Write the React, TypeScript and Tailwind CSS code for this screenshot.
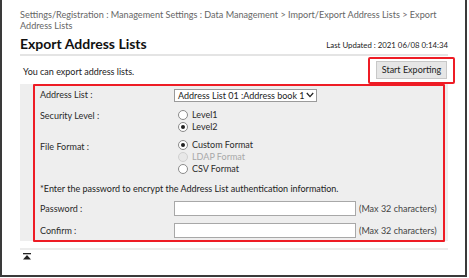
import React from 'react'

function Radio({ checked, disabled, label }: { checked?: boolean; disabled?: boolean; label: string }) {
  return (
    <div className="flex h-[12px] items-center">
      <span
        className={
          'flex h-[10px] w-[10px] items-center justify-center rounded-full border ' +
          (disabled ? 'border-[#d0d0d0] bg-[#e8e8e8]' : 'border-[#8a8a8a] bg-white')
        }
      >
        {checked && <span className="h-[4px] w-[4px] rounded-full bg-[#222]" />}
      </span>
      <span className={'ml-[4px] whitespace-nowrap ' + (disabled ? 'text-[#a8a8a8]' : 'text-[#2a2a2a]')}>{label}</span>
    </div>
  )
}

function TopIcon() {
  return (
    <svg width="8" height="7" viewBox="0 0 8 7">
      <rect x="0" y="0" width="8" height="1.3" fill="#222" />
      <polygon points="4,2 8,6.6 0,6.6" fill="#222" />
    </svg>
  )
}

export default function App() {
  return (
    <div className="h-[278px] w-[469px] bg-white" style={{ fontFamily: 'Lato, "Open Sans", sans-serif' }}>
      <div className="h-[277px] w-[467px] border-x-2 border-b-2 border-[#3a3a3a] pl-[18px] pt-[9px] text-[9px] text-[#2a2a2a]">
        <div className="w-[428px]">
          <div className="whitespace-nowrap text-[9.1px] leading-[11px] text-[#666]">
            Settings/Registration : Management Settings : Data Management &gt; Import/Export Address Lists &gt; Export
            <br />
            Address Lists
          </div>

          <div className="mt-[5px] flex h-[20px] items-end justify-between border-b-2 border-[#e4e4e4] pb-[1px]">
            <h1 className="whitespace-nowrap text-[14px] font-bold leading-[18px] text-[#111]">Export Address Lists</h1>
            <span className="whitespace-nowrap pb-[3px] text-[7.8px] leading-[10px] text-[#222]">Last Updated : 2021 06/08 0:14:34</span>
          </div>

          <div className="flex h-[28px] items-center justify-between">
            <span className="whitespace-nowrap pl-[3px] pt-[3px] text-[#222]">You can export address lists.</span>
            <div className="-mr-[7px] flex h-[27px] w-[87px] items-center justify-center rounded-[2px] border-2 border-[#ee1c25]">
              <button className="h-[18px] w-[71px] whitespace-nowrap border border-[#c8c8c8] bg-[#e6e6e6] text-[9px] leading-[16px] text-[#222]">
                Start Exporting
              </button>
            </div>
          </div>

          <div className="flex h-[157px] bg-[#eeeeee] pl-[13px]">
            <div className="h-[158px] w-[412px] rounded-[1px] border-2 border-[#ee1c25] pl-[5px] pt-[2px]">
              <div className="flex h-[14px] items-center">
                <span className="w-[134px] whitespace-nowrap">Address List :</span>
                <div className="flex h-[13px] w-[143px] items-center justify-between border border-[#9a9a9a] bg-white pl-[3px] pr-[2px] leading-[11px] text-[#222]">
                  <span className="whitespace-nowrap">Address List 01 :Address book 1</span>
                  <svg width="8" height="6" viewBox="0 0 8 6">
                    <polyline points="0.8,1 4,4.6 7.2,1" fill="none" stroke="#222" strokeWidth="1.3" />
                  </svg>
                </div>
              </div>

              <div className="mt-[7px] flex">
                <span className="w-[134px] whitespace-nowrap pt-[1px] leading-[12px]">Security Level :</span>
                <div className="pl-[4px]">
                  <Radio label="Level1" />
                  <Radio label="Level2" checked />
                </div>
              </div>

              <div className="mt-[6px] flex">
                <span className="w-[134px] whitespace-nowrap pt-[2px] leading-[12px]">File Format :</span>
                <div className="pl-[4px]">
                  <Radio label="Custom Format" checked />
                  <Radio label="LDAP Format" disabled />
                  <Radio label="CSV Format" />
                </div>
              </div>

              <div className="mt-[8px] h-[12px] whitespace-nowrap leading-[12px] text-[#222]">
                *Enter the password to encrypt the Address List authentication information.
              </div>

              <div className="mt-[5px] flex h-[17px] items-center">
                <span className="w-[134px] whitespace-nowrap">Password :</span>
                <input type="password" className="h-[15px] w-[182px] border border-[#a8a8a8] bg-white outline-none" />
                <span className="ml-[3px] whitespace-nowrap text-[#444]">(Max 32 characters)</span>
              </div>

              <div className="mt-[5px] flex h-[17px] items-center">
                <span className="w-[134px] whitespace-nowrap">Confirm :</span>
                <input type="password" className="h-[15px] w-[182px] border border-[#a8a8a8] bg-white outline-none" />
                <span className="ml-[3px] whitespace-nowrap text-[#444]">(Max 32 characters)</span>
              </div>
            </div>
          </div>

          <div className="mt-[7px] h-[2px] bg-[#ececec]" />
          <div className="mt-[3px] pl-[3px]">
            <TopIcon />
          </div>
        </div>
      </div>
    </div>
  )
}
